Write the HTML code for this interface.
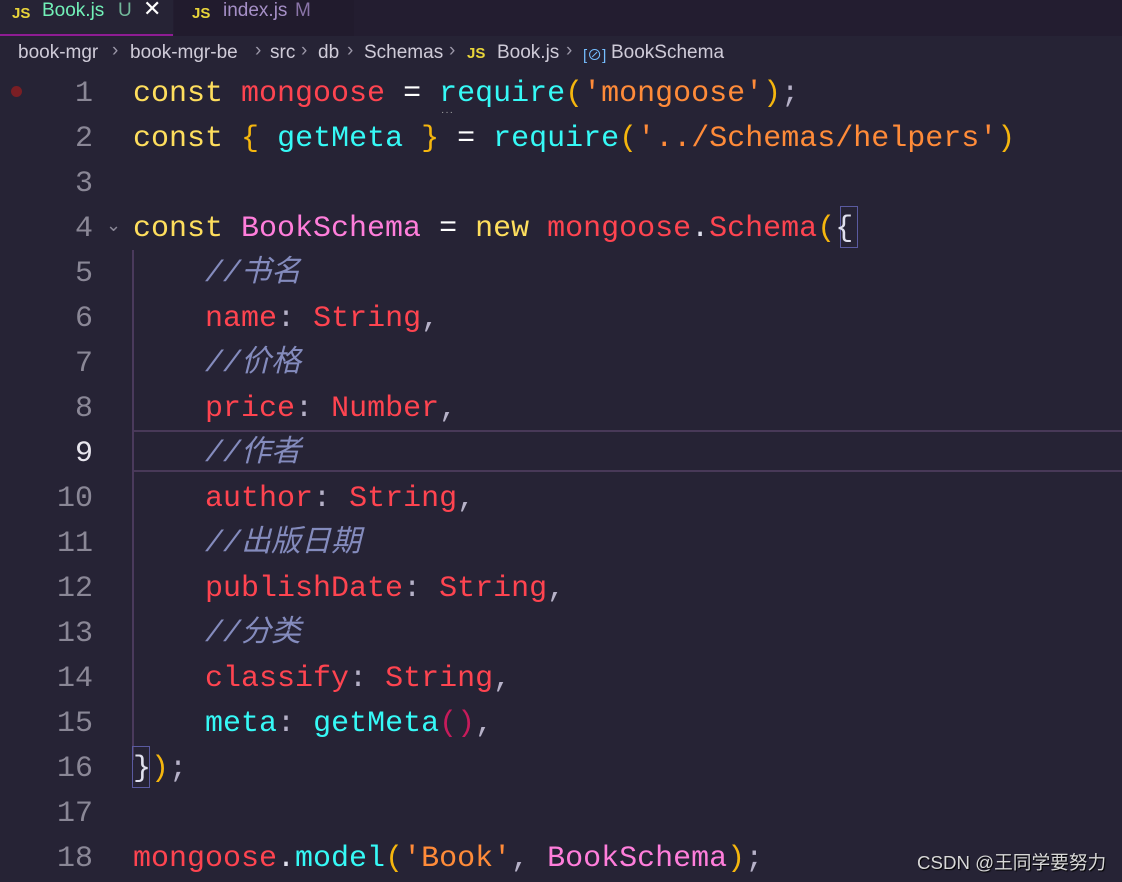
<!DOCTYPE html>
<html><head><meta charset="utf-8"><style>
*{margin:0;padding:0;box-sizing:border-box}
body{width:1122px;height:879px;background:#262335;overflow:hidden;position:relative;font-family:"Liberation Sans","Noto Sans CJK SC",sans-serif}
.tabs{position:absolute;left:0;top:0;width:1122px;height:36px;background:#231d30}
.tab{position:absolute;top:0;height:36px;font-size:19px;line-height:22px}
.t1{left:0;width:173px;background:#262335;border-bottom:2px solid #8e1c93}
.js{color:#e9d53a;font-weight:bold;font-size:15px}
.cb{position:absolute;top:42px;font-size:19px;color:#cfcbd8;white-space:pre}
.sv{position:absolute;top:40px;font-size:19px;color:#9b97a8}
.ln{position:absolute;left:0;width:93px;text-align:right;font-family:"Liberation Mono",monospace;font-size:30px;color:#8a8796;height:45px;line-height:45px}
.l{position:absolute;left:133px;font-family:"Liberation Mono","Noto Sans CJK SC",monospace;font-size:30px;height:45px;line-height:45px;white-space:pre;color:#fff}
.k{color:#fede5d}.r{color:#fe4450}.c{color:#36f9f6}.o{color:#ff8b39}.g{color:#f5b60e}.p{color:#ff7edb}.w{color:#e0e0ee}.cm{color:#848bbd;font-style:italic}.m{color:#c71b5b}.d{color:#b6b1c8}
</style></head><body>
<div class="tabs">
 <div class="tab t1"><span class="js" style="position:absolute;left:12px;top:3px">JS</span><span style="position:absolute;left:42px;top:0;color:#72f1b8">Book.js</span><span style="position:absolute;left:118px;top:0;color:#72b89a">U</span><span style="position:absolute;left:143px;top:-2px;color:#fff;font-size:22px">✕</span></div>
 <div class="tab" style="left:174px;width:180px;background:#211b2d"><span class="js" style="position:absolute;left:18px;top:3px">JS</span><span style="position:absolute;left:49px;top:0;color:#a58fc6">index.js</span><span style="position:absolute;left:121px;top:0;color:#8a74a8">M</span></div>
</div>
<span class="cb" style="left:18px">book-mgr</span><span class="sv" style="left:112px">›</span>
<span class="cb" style="left:130px">book-mgr-be</span><span class="sv" style="left:255px">›</span>
<span class="cb" style="left:270px">src</span><span class="sv" style="left:301px">›</span>
<span class="cb" style="left:318px">db</span><span class="sv" style="left:347px">›</span>
<span class="cb" style="left:364px">Schemas</span><span class="sv" style="left:449px">›</span>
<span class="js" style="position:absolute;left:467px;top:45px">JS</span>
<span class="cb" style="left:497px">Book.js</span><span class="sv" style="left:566px">›</span>
<span style="position:absolute;left:583px;top:44px;color:#75beff;font-size:15px">[⊘]</span>
<span class="cb" style="left:611px">BookSchema</span>
<div style="position:absolute;left:11px;top:86px;width:11px;height:11px;border-radius:50%;background:#7a1e24"></div>
<div style="position:absolute;left:132px;top:430px;width:990px;height:42px;border:2px solid #483958;border-right:none"></div>
<div style="position:absolute;left:132px;top:250px;width:2px;height:510px;background:#4a3a5c"></div>
<div style="position:absolute;left:840px;top:206px;width:18px;height:42px;border:1px solid #5a5aa0"></div>
<div style="position:absolute;left:132px;top:746px;width:18px;height:42px;border:1px solid #5a5aa0"></div>
<div style="position:absolute;left:441px;top:107px;color:#aaa;font-size:10px;letter-spacing:1px">···</div>
<div style="position:absolute;left:106px;top:215px;color:#8a8796;font-size:18px">⌄</div>
<div style="position:absolute;left:0;top:72px">
<div class="ln" style="top:0">1</div><div class="l" style="top:0"><span class="k">const</span> <span class="r">mongoose</span> = <span class="c">require</span><span class="g">(</span><span class="o">'mongoose'</span><span class="g">)</span><span class="d">;</span></div>
<div class="ln" style="top:45px">2</div><div class="l" style="top:45px"><span class="k">const</span> <span class="g">{</span> <span class="c">getMeta</span> <span class="g">}</span> = <span class="c">require</span><span class="g">(</span><span class="o">'../Schemas/helpers'</span><span class="g">)</span></div>
<div class="ln" style="top:90px">3</div>
<div class="ln" style="top:135px">4</div><div class="l" style="top:135px"><span class="k">const</span> <span class="p">BookSchema</span> = <span class="k">new</span> <span class="r">mongoose</span><span class="w">.</span><span class="r">Schema</span><span class="g">(</span><span class="w">{</span></div>
<div class="ln" style="top:180px">5</div><div class="l" style="top:180px">    <span class="cm">//书名</span></div>
<div class="ln" style="top:225px">6</div><div class="l" style="top:225px">    <span class="r">name</span><span class="d">:</span> <span class="r">String</span><span class="d">,</span></div>
<div class="ln" style="top:270px">7</div><div class="l" style="top:270px">    <span class="cm">//价格</span></div>
<div class="ln" style="top:315px">8</div><div class="l" style="top:315px">    <span class="r">price</span><span class="d">:</span> <span class="r">Number</span><span class="d">,</span></div>
<div class="ln" style="top:360px;color:#e8e6ee">9</div><div class="l" style="top:360px">    <span class="cm">//作者</span></div>
<div class="ln" style="top:405px">10</div><div class="l" style="top:405px">    <span class="r">author</span><span class="d">:</span> <span class="r">String</span><span class="d">,</span></div>
<div class="ln" style="top:450px">11</div><div class="l" style="top:450px">    <span class="cm">//出版日期</span></div>
<div class="ln" style="top:495px">12</div><div class="l" style="top:495px">    <span class="r">publishDate</span><span class="d">:</span> <span class="r">String</span><span class="d">,</span></div>
<div class="ln" style="top:540px">13</div><div class="l" style="top:540px">    <span class="cm">//分类</span></div>
<div class="ln" style="top:585px">14</div><div class="l" style="top:585px">    <span class="r">classify</span><span class="d">:</span> <span class="r">String</span><span class="d">,</span></div>
<div class="ln" style="top:630px">15</div><div class="l" style="top:630px">    <span class="c">meta</span><span class="d">:</span> <span class="c">getMeta</span><span class="m">()</span><span class="d">,</span></div>
<div class="ln" style="top:675px">16</div><div class="l" style="top:675px"><span class="w">}</span><span class="g">)</span><span class="d">;</span></div>
<div class="ln" style="top:720px">17</div>
<div class="ln" style="top:765px">18</div><div class="l" style="top:765px"><span class="r">mongoose</span><span class="w">.</span><span class="c">model</span><span class="g">(</span><span class="o">'Book'</span><span class="d">,</span> <span class="p">BookSchema</span><span class="g">)</span><span class="d">;</span></div>
</div>
<div style="position:absolute;left:917px;top:848px;font-size:18.7px;color:#d8d8d8;text-shadow:1px 1px 1px #000">CSDN @王同学要努力</div>
</body></html>
